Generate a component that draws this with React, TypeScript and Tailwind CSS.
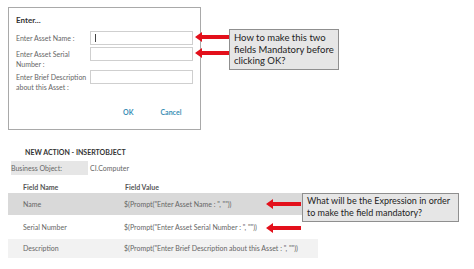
import React from "react";

function Arrow({ className }: { className: string }) {
  return (
    <svg className={`absolute ${className}`} width="35" height="10" viewBox="0 0 35 10">
      <polygon points="0,5 7,0 7,3 35,3 35,7 7,7 7,10" fill="#e3101b" />
    </svg>
  );
}

function DialogRow({ label, h, cursor }: { label: React.ReactNode; h: string; cursor?: boolean }) {
  return (
    <div className={`flex items-start ${h}`}>
      <div className="w-[74px] whitespace-nowrap pt-[2px] text-[7px] leading-[10px] text-[#666]">{label}</div>
      <div className="relative h-[14px] w-[103px] border border-[#cfcfcf] bg-white">
        {cursor && <div className="absolute left-[4px] top-[2px] h-[8px] w-px bg-[#444]" />}
      </div>
    </div>
  );
}

export default function App() {
  const rows = [
    { name: "Name", value: '$(Prompt("Enter Asset Name : ", ""))', cls: "bg-[#d9d9d9] h-[22px]" },
    { name: "Serial Number", value: '$(Prompt("Enter Asset Serial Number : ", ""))', cls: "bg-white h-[22px]" },
    { name: "Description", value: '$(Prompt("Enter Brief Description about this Asset : ", ""))', cls: "bg-[#f2f2f2] h-[19px]" },
  ];

  return (
    <div className="relative h-[269px] w-[474px] overflow-hidden bg-white font-['Lato',sans-serif]">
      {/* dialog */}
      <div className="ml-[8px] mt-[7px] h-[123px] w-[193px] border border-[#a9a9a9] bg-white px-[7px] pt-[7px]">
        <div className="text-[8px] font-bold leading-[10px] text-[#333]">Enter...</div>
        <div className="mt-[6px] flex flex-col">
          <DialogRow label="Enter Asset Name :" h="h-[16px]" cursor />
          <DialogRow label={<>Enter Asset Serial<br />Number :</>} h="h-[23px]" />
          <DialogRow label={<>Enter Brief Description<br />about this Asset :</>} h="h-[23px]" />
        </div>
        <div className="mt-[14px] flex text-[7px] font-bold leading-[10px] text-[#3b8fb5]">
          <span className="ml-[107px]">OK</span>
          <span className="ml-[27px]">Cancel</span>
        </div>
      </div>

      {/* callout top */}
      <Arrow className="left-[195px] top-[32px]" />
      <Arrow className="left-[195px] top-[48px]" />
      <div className="absolute left-[229px] top-[29px] h-[41px] w-[110px] whitespace-nowrap border border-[#8f8f8f] bg-[#e6e6e6] px-[4px] pt-[2px] text-[9.5px] leading-[11.5px] text-[#222]">
        How to make this two<br />fields Mandatory before<br />clicking OK?
      </div>

      {/* insert object */}
      <div className="ml-[25px] mt-[17px] text-[7px] font-bold leading-[10px] text-[#333]">NEW ACTION - INSERTOBJECT</div>
      <div className="mt-[4px] flex items-center text-[7px] text-[#666]">
        <div className="ml-[11px] flex h-[14px] w-[77px] items-center bg-[#e6e6e6]">Business Object:</div>
        <div className="ml-[2px]">CI.Computer</div>
      </div>
      <div className="mt-[7px] flex text-[7px] font-bold leading-[10px] text-[#555]">
        <div className="ml-[23px] w-[102px]">Field Name</div>
        <div>Field Value</div>
      </div>
      <div className="ml-[8px] mt-[1px] flex w-[310px] flex-col gap-[1px]">
        {rows.map((r) => (
          <div key={r.name} className={`flex items-center text-[7px] text-[#666] ${r.cls}`}>
            <div className="w-[116px] pl-[15px]">{r.name}</div>
            <div className="whitespace-nowrap">{r.value}</div>
          </div>
        ))}
      </div>

      {/* callout bottom */}
      <Arrow className="left-[266px] top-[199px]" />
      <Arrow className="left-[266px] top-[223px]" />
      <div className="absolute left-[302px] top-[193px] h-[29px] w-[157px] whitespace-nowrap border border-[#8f8f8f] bg-[#e6e6e6] px-[4px] pt-[1px] text-[9px] leading-[12px] text-[#222]">
        What will be the Expression in order<br />to make the field mandatory?
      </div>
    </div>
  );
}
